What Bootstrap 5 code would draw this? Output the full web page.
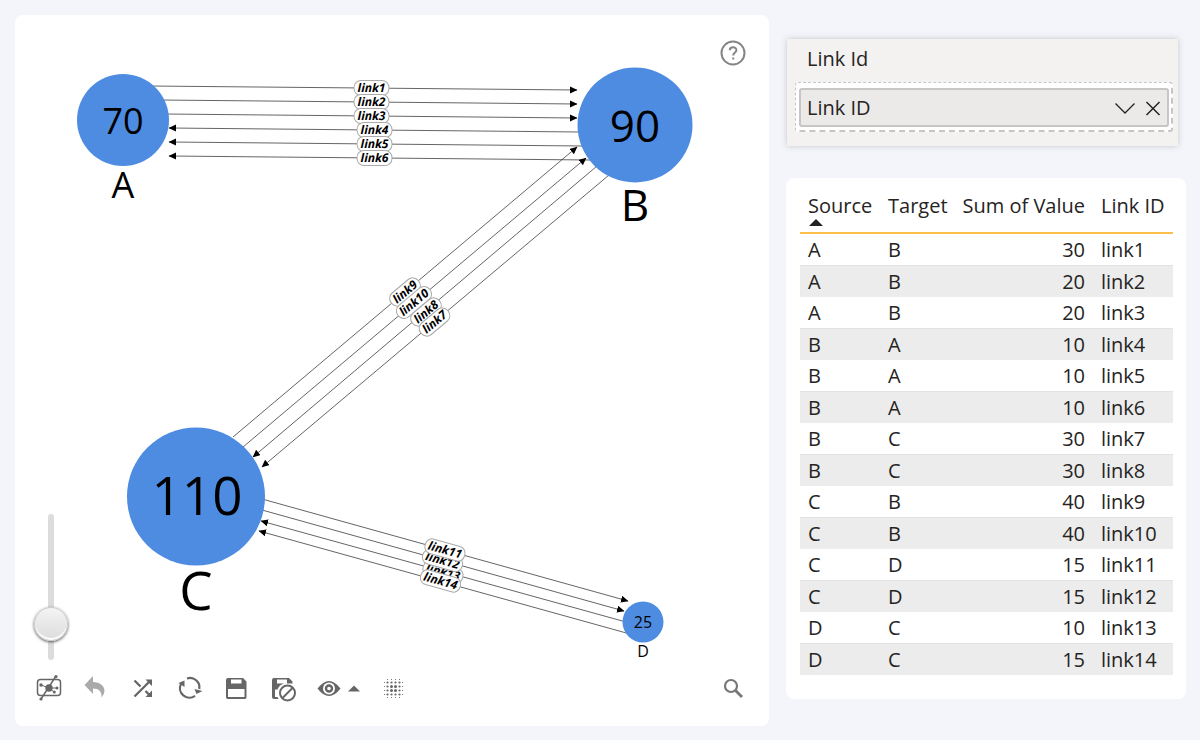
<!DOCTYPE html>
<html lang="en">
<head>
<meta charset="utf-8">
<meta name="viewport" content="width=device-width, initial-scale=1">
<title>Link Id report</title>
<link href="https://cdn.jsdelivr.net/npm/bootstrap@5.3.0/dist/css/bootstrap.min.css" rel="stylesheet">
<style>
  body { background: #f4f5fa; color: #252423; font-family: "Open Sans", "Noto Sans", sans-serif; font-size: 20px; line-height: 28px; }
  .report { display: grid; grid-template-columns: 754fr 400fr; gap: 17px; padding: 15px 14px 14px 15px; align-items: start; }
  .panel { background: #fff; border-radius: 8px; }

  /* network graph */
  .graph { display: block; width: 100%; height: auto; }
  .graph text { text-anchor: middle; fill: #000; }
  .node { fill: #4e8ce2; }
  .edge { stroke: #222; stroke-width: .7; marker-end: url(#arrow); }
  .pill rect { fill: #fff; stroke: #aaa; stroke-width: 1; }
  .graph .pill text { font-size: 12px; font-weight: 700; font-style: italic; }

  .tool { width: 47px; height: 36px; padding: 0; border: 0; background: none; color: #666; display: flex; align-items: center; justify-content: center; }
  .tool-wide { width: 62px; }
  .tools { left: 10px; bottom: 20px; }
  .help { right: 13px; top: 20px; }
  .search { right: 13px; bottom: 20px; }

  .zoom { left: 18px; bottom: 66px; width: 36px; height: 146px; }
  .zoom input { flex: none; width: 146px; height: 36px; margin: 0; appearance: none; -webkit-appearance: none; background: none; transform: rotate(-90deg); }
  .zoom input::-webkit-slider-runnable-track { height: 6px; border-radius: 3px; background: #dcdcdc; }
  .zoom input::-webkit-slider-thumb { -webkit-appearance: none; width: 34px; height: 34px; margin-top: -14px; border: 1px solid #ccc; border-radius: 50%; background: linear-gradient(to left, #f4f4f4, #dcdcdc); box-shadow: inset 2px 0 1px #fff, -1px 0 3px #555; }

  /* field well */
  .well { background: #f3f2f1; margin: 24px 8px 0 1px; padding: 6px 5px 14px 8px; box-shadow: 0 0 6px #c4c6ca; }
  .well-title { padding: 0 12px; margin: 0 0 9px; font-size: 20px; line-height: 28px; font-weight: 400; }
  .drop { background: #fff; border: 2px dashed #c8c6c4; border-width: 1px 2px 2px 1px; border-radius: 3px; padding: 5px 2px 3px 3px; }
  .pick { background: #ebeae9; border: 2px solid #c8c6c4; border-radius: 3px; height: 39px; padding: 0 0 0 6px; }
  .pick button { width: 28px; height: 30px; padding: 0; border: 0; background: none; color: #252423; display: flex; align-items: center; justify-content: center; }

  /* data table */
  .data { margin-top: 32px; padding: 14px 13px 24px 14px; }
  .data table { table-layout: fixed; width: 100%; margin: 0; }
  .data th, .data td { padding: 0 8px; white-space: nowrap; }
  .data th { font-weight: 400; height: 41px; line-height: 27px; vertical-align: top; border-bottom: 2px solid #fbc04a; }
  .data td { line-height: 31px; height: 31px; }
  .data tbody tr:nth-child(even) td { background: #ececec; border-top: 1px solid #e2e2e2; }
  .c-source { width: 80px; } .c-target { width: 74px; } .c-link { width: 80px; }
  .sort { display: block; width: 16px; height: 8px; }
</style>
</head>
<body>
<main class="report">
  <section class="panel position-relative" aria-label="Network graph">
    <svg class="graph" viewBox="15 15 754 711" role="img" aria-label="Links between nodes A, B, C and D">
      <defs>
        <marker id="arrow" markerUnits="userSpaceOnUse" markerWidth="8" markerHeight="8" refX="7" refY="3.5" orient="auto"><path d="M0 0L7.500 3.500L0 7Z"/></marker>
      </defs>
      <g>
        <path class="edge" d="M150 86L577 90"/><path class="edge" d="M160 100L577 104"/><path class="edge" d="M165 114L577 118"/>
        <path class="edge" d="M580 132L169 128"/><path class="edge" d="M583 146L169 142"/><path class="edge" d="M590 160L169 156"/>
        <path class="edge" d="M233 437L577 147"/><path class="edge" d="M243 447L586 158"/>
        <path class="edge" d="M597 166L253 457"/><path class="edge" d="M609 175L262 467"/>
        <path class="edge" d="M262 499L628 601"/><path class="edge" d="M262 510L624 611"/>
        <path class="edge" d="M626 622L261 521"/><path class="edge" d="M630 634L259 531"/>
      </g>
      <g>
        <circle class="node" cx="123" cy="120" r="46"/>
        <circle class="node" cx="635" cy="125" r="57.500"/>
        <circle class="node" cx="196" cy="496.500" r="69"/>
        <circle class="node" cx="643" cy="622" r="20.500"/>
        <text x="123" y="134" font-size="36">70</text><text x="123" y="198" font-size="36">A</text>
        <text x="635" y="142" font-size="44">90</text><text x="635" y="221" font-size="44">B</text>
        <text x="197" y="515" font-size="53">110</text><text x="196" y="610" font-size="53">C</text>
        <text x="643" y="628" font-size="16">25</text><text x="643" y="657" font-size="16">D</text>
      </g>
      <g class="pill" transform="translate(371.500 88) rotate(.5)"><rect x="-17.500" y="-7.500" width="35" height="15" rx="7"/><text y="4">link1</text></g>
      <g class="pill" transform="translate(371.500 102) rotate(.5)"><rect x="-17.500" y="-7.500" width="35" height="15" rx="7"/><text y="4">link2</text></g>
      <g class="pill" transform="translate(371.500 116) rotate(.5)"><rect x="-17.500" y="-7.500" width="35" height="15" rx="7"/><text y="4">link3</text></g>
      <g class="pill" transform="translate(374.500 130) rotate(.5)"><rect x="-17.500" y="-7.500" width="35" height="15" rx="7"/><text y="4">link4</text></g>
      <g class="pill" transform="translate(374.500 144) rotate(.5)"><rect x="-17.500" y="-7.500" width="35" height="15" rx="7"/><text y="4">link5</text></g>
      <g class="pill" transform="translate(374.500 158) rotate(.5)"><rect x="-17.500" y="-7.500" width="35" height="15" rx="7"/><text y="4">link6</text></g>
      <g class="pill" transform="translate(405 292) rotate(-40)"><rect x="-17.500" y="-7.500" width="35" height="15" rx="7"/><text y="4">link9</text></g>
      <g class="pill" transform="translate(414 302.500) rotate(-40)"><rect x="-20.500" y="-7.500" width="41" height="15" rx="7"/><text y="4">link10</text></g>
      <g class="pill" transform="translate(426 312) rotate(-40)"><rect x="-17.500" y="-7.500" width="35" height="15" rx="7"/><text y="4">link8</text></g>
      <g class="pill" transform="translate(434.500 322) rotate(-40)"><rect x="-17.500" y="-7.500" width="35" height="15" rx="7"/><text y="4">link7</text></g>
      <g class="pill" transform="translate(443 572) rotate(15.600)"><rect x="-20.500" y="-7.500" width="41" height="15" rx="7"/><text y="4">link13</text></g>
      <g class="pill" transform="translate(442.500 560.500) rotate(15.600)"><rect x="-20.500" y="-7.500" width="41" height="15" rx="7"/><text y="4">link12</text></g>
      <g class="pill" transform="translate(445 550) rotate(15.600)"><rect x="-20.500" y="-7.500" width="41" height="15" rx="7"/><text y="4">link11</text></g>
      <g class="pill" transform="translate(440.500 581) rotate(15.600)"><rect x="-20.500" y="-7.500" width="41" height="15" rx="7"/><text y="4">link14</text></g>
    </svg>

    <button type="button" class="tool help position-absolute" aria-label="Help">
      <svg width="28" height="28" viewBox="0 0 28 28" fill="none" stroke="#858585" stroke-width="2"><circle cx="14" cy="14" r="11.500"/><path d="M10.800 11.300C10.800 7.300 17.400 7.300 17.400 11.200C17.400 13.500 14.200 13.700 14.200 16.600"/><path d="M14.200 18.500V20.500"/></svg>
    </button>

    <div class="zoom position-absolute d-flex align-items-center justify-content-center">
      <input type="range" min="0" max="100" value="17" aria-label="Zoom">
    </div>

    <div class="tools position-absolute d-flex" role="toolbar" aria-label="Graph tools">
      <button type="button" class="tool" aria-label="Toggle graph physics">
        <svg width="28" height="28" viewBox="0 0 28 28" fill="none" stroke="currentColor"><rect x="2.500" y="5.500" width="23" height="16" rx="3" stroke-width="1.500"/><path d="M6 25L21 2" stroke-width="1.500"/><path d="M6 11L14 14L22 14M14 14L19 18" stroke-width="1"/><g fill="currentColor" stroke="none"><circle cx="14" cy="14" r="3.700"/><circle cx="6" cy="11" r="1.700"/><circle cx="22" cy="14" r="1.500"/><circle cx="19.300" cy="18" r="1.500"/><circle cx="21" cy="2.500" r="1.600"/><circle cx="6" cy="25" r="1.600"/></g></svg>
      </button>
      <button type="button" class="tool" aria-label="Undo">
        <svg width="28" height="28" viewBox="0 0 28 28" fill="#aaa"><path d="M11 2V8C18 8 22.500 12 22.500 17Q22.500 20 19.500 23.500C20 17.500 17 14.500 11 14.500V20L2.500 11Z"/></svg>
      </button>
      <button type="button" class="tool" aria-label="Shuffle layout">
        <svg width="28" height="28" viewBox="0 0 28 28" fill="none" stroke="currentColor" stroke-width="2.300"><path d="M5.500 22.500L21 7M5.500 6.500L11.500 12.500M16.500 17L21 21.500"/><path d="M16.500 5.500H23V12ZM23 16.500V23H16.500Z" fill="currentColor" stroke="none"/></svg>
      </button>
      <button type="button" class="tool" aria-label="Refresh">
        <svg width="28" height="28" viewBox="0 0 28 28" fill="none" stroke="currentColor" stroke-width="2.200"><path d="M11 4.500A9.400 9.400 0 0 1 23.300 15"/><path d="M19 21.800A9.400 9.400 0 0 1 5 10"/><path d="M18.500 15L26.500 17L20.500 20ZM2.500 9L8.500 6.500L8.500 13Z" fill="currentColor" stroke="none"/></svg>
      </button>
      <button type="button" class="tool" aria-label="Save">
        <svg width="28" height="28" viewBox="0 0 28 28" fill="currentColor" fill-rule="evenodd"><path d="M5 4H20L23.500 7.500V23Q23.500 25 22 25H4.500Q3 25 3 23V6Q3 4 5 4ZM8 5.500V9.500H18.500V5.500ZM5 15V23H21.500V15Z"/></svg>
      </button>
      <button type="button" class="tool" aria-label="Discard saved layout">
        <svg width="28" height="28" viewBox="0 0 28 28"><path fill="currentColor" fill-rule="evenodd" d="M4 4H19L22.500 7.500V9.500H14Q9 11 7.500 15.500H5V23H7.500L8.500 25H4Q2 25 2 23V6Q2 4 4 4ZM7 5.500V9.500H17V5.500Z"/><circle cx="17.500" cy="19" r="9" fill="#fff"/><circle cx="17.500" cy="19" r="7.500" fill="none" stroke="currentColor" stroke-width="2"/><path d="M12.500 24L22.500 14" stroke="currentColor" stroke-width="2"/></svg>
      </button>
      <button type="button" class="tool tool-wide" aria-label="Visibility options">
        <svg width="62" height="28" viewBox="0 0 62 28"><path fill="currentColor" d="M10.500 14.500Q22 -.5 33.500 14.500Q22 29.500 10.500 14.500Z"/><circle cx="22" cy="14.500" r="6" fill="#fff"/><circle cx="22" cy="14.500" r="3" fill="none" stroke="currentColor" stroke-width="2.400"/><path d="M41 17.500L47 11.500L53 17.500Z" fill="currentColor"/></svg>
      </button>
      <button type="button" class="tool" aria-label="Grid">
        <svg width="28" height="28" viewBox="0 0 28 28" fill="none" stroke="currentColor" stroke-linecap="round"><path stroke-width="3" stroke-dasharray="0 4" d="M12.500 12.500H17M12.500 16.500H17"/><path stroke-width="2.200" stroke-dasharray="0 4" d="M8.500 8.500H21M8.500 20.500H21M8.500 12.500V17M20.500 12.500V17"/><path stroke-width="1.200" stroke-dasharray="0 4" d="M8.500 5.500H21M8.500 23.500H21M5.500 8.500V21M23.500 8.500V21"/></svg>
      </button>
    </div>

    <button type="button" class="tool search position-absolute" aria-label="Search">
      <svg width="28" height="28" viewBox="0 0 28 28" fill="none" stroke="#777"><circle cx="12" cy="12" r="6" stroke-width="2.200"/><path d="M16.500 16.500L23 23" stroke-width="2.800"/></svg>
    </button>
  </section>

  <aside>
    <section class="well">
      <h2 class="well-title">Link Id</h2>
      <div class="drop">
        <div class="pick d-flex align-items-center">
          <span class="flex-grow-1">Link ID</span>
          <button type="button" aria-label="Field options"><svg width="22" height="20" viewBox="0 0 22 20" fill="none" stroke="currentColor" stroke-width="1.300"><path d="M1.500 5.500L11 15L20.500 5.500"/></svg></button>
          <button type="button" aria-label="Remove field"><svg width="20" height="20" viewBox="0 0 20 20" fill="none" stroke="currentColor" stroke-width="1.500"><path d="M3.500 4L16.500 17M16.500 4L3.500 17"/></svg></button>
        </div>
      </div>
    </section>

    <section class="panel data">
      <table>
        <colgroup><col class="c-source"><col class="c-target"><col><col class="c-link"></colgroup>
        <thead><tr>
          <th scope="col" aria-sort="ascending">Source<svg class="sort" viewBox="0 0 16 8"><path d="M1 7L8 0L15 7Z" fill="#222"/></svg></th>
          <th scope="col">Target</th><th scope="col" class="text-end">Sum of Value</th><th scope="col">Link ID</th>
        </tr></thead>
        <tbody>
          <tr><td>A</td><td>B</td><td class="text-end">30</td><td>link1</td></tr>
          <tr><td>A</td><td>B</td><td class="text-end">20</td><td>link2</td></tr>
          <tr><td>A</td><td>B</td><td class="text-end">20</td><td>link3</td></tr>
          <tr><td>B</td><td>A</td><td class="text-end">10</td><td>link4</td></tr>
          <tr><td>B</td><td>A</td><td class="text-end">10</td><td>link5</td></tr>
          <tr><td>B</td><td>A</td><td class="text-end">10</td><td>link6</td></tr>
          <tr><td>B</td><td>C</td><td class="text-end">30</td><td>link7</td></tr>
          <tr><td>B</td><td>C</td><td class="text-end">30</td><td>link8</td></tr>
          <tr><td>C</td><td>B</td><td class="text-end">40</td><td>link9</td></tr>
          <tr><td>C</td><td>B</td><td class="text-end">40</td><td>link10</td></tr>
          <tr><td>C</td><td>D</td><td class="text-end">15</td><td>link11</td></tr>
          <tr><td>C</td><td>D</td><td class="text-end">15</td><td>link12</td></tr>
          <tr><td>D</td><td>C</td><td class="text-end">10</td><td>link13</td></tr>
          <tr><td>D</td><td>C</td><td class="text-end">15</td><td>link14</td></tr>
        </tbody>
      </table>
    </section>
  </aside>
</main>
<script src="https://cdn.jsdelivr.net/npm/bootstrap@5.3.0/dist/js/bootstrap.bundle.min.js"></script>
</body>
</html>
